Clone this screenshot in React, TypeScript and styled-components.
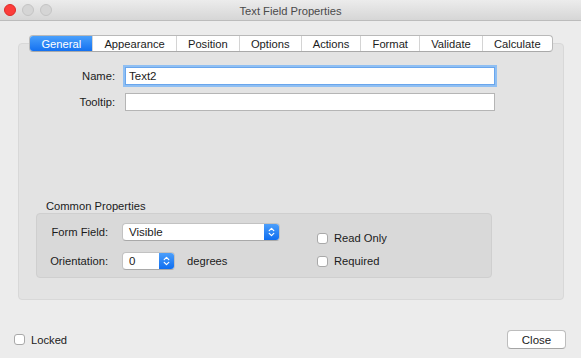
import React from 'react'
import styled, { createGlobalStyle } from 'styled-components'

const Global = createGlobalStyle`
  html, body { margin: 0; padding: 0; }
  body {
    background: #ececec;
    font-family: "Liberation Sans", Arial, Helvetica, sans-serif;
    font-size: 11.2px;
    color: #1b1b1b;
  }
`

const Window = styled.div`
  width: 581px;
  height: 358px;
  display: flex;
  flex-direction: column;
  background: #ececec;
  overflow: hidden;
`

const TitleBar = styled.div`
  height: 20px;
  flex: none;
  display: grid;
  grid-template-columns: 1fr auto 1fr;
  align-items: center;
  background: linear-gradient(#ececec, #d6d6d6);
  border-bottom: 1px solid #bcbcbc;
`

const Lights = styled.div`
  display: flex;
  gap: 6px;
  padding-left: 4px;
`

const Light = styled.span<{ $red?: boolean }>`
  width: 12px;
  height: 12px;
  border-radius: 50%;
  box-sizing: border-box;
  background: ${({ $red }) => ($red ? '#fc3d3b' : '#d5d5d5')};
  border: 1px solid ${({ $red }) => ($red ? '#de2b27' : '#c4c4c4')};
`

const Title = styled.div`
  color: #4a4a4a;
  font-size: 11.2px;
  padding-top: 1px;
`

const Body = styled.div`
  flex: 1;
  display: flex;
  flex-direction: column;
  padding: 14px 17px 0 18px;
`

const Tabs = styled.div`
  position: relative;
  z-index: 1;
  align-self: center;
  display: flex;
  height: 17px;
  background: #fff;
  border: 1px solid #b9b9b9;
  border-bottom-color: #a9a9a9;
  border-radius: 4px;
  box-sizing: border-box;
  overflow: hidden;
`

const Tab = styled.div<{ $active?: boolean }>`
  display: flex;
  align-items: center;
  justify-content: center;
  padding: 0 11.1px;
  color: ${({ $active }) => ($active ? '#fff' : '#1b1b1b')};
  background: ${({ $active }) => ($active ? 'linear-gradient(#4aa0fb, #1471f1)' : 'transparent')};
  & + & { border-left: 1px solid #d4d4d4; }
`

const Panel = styled.div`
  margin-top: -9px;
  height: 257px;
  box-sizing: border-box;
  display: flex;
  flex-direction: column;
  background: #e3e3e3;
  border: 1px solid #d8d8d8;
  border-radius: 4px;
  padding: 23px 0 21px 0;
`

const Fields = styled.div`
  display: grid;
  grid-template-columns: 96px 370px;
  column-gap: 10px;
  row-gap: 8px;
  align-items: center;
`

const Label = styled.label`
  text-align: right;
`

const TextInput = styled.div<{ $focus?: boolean }>`
  height: 18px;
  box-sizing: border-box;
  background: #fff;
  padding: 0 3px;
  display: flex;
  align-items: center;
  font-size: 11.5px;
  border: 1px solid ${({ $focus }) => ($focus ? '#6aa6ec' : '#b5b5b5')};
  box-shadow: ${({ $focus }) => ($focus ? '0 0 0 2px #8fbff3' : 'none')};
`

const Section = styled.div`
  margin-top: auto;
  margin-left: 17px;
  width: 456px;
`

const SectionTitle = styled.div`
  line-height: 14px;
  padding-left: 10px;
`

const Group = styled.div`
  height: 65px;
  box-sizing: border-box;
  display: flex;
  align-items: flex-start;
  background: #d9d9d9;
  border: 1px solid #cfcfcf;
  border-radius: 4px;
  padding: 9px 0 0 0;
`

const GroupGrid = styled.div`
  display: grid;
  grid-template-columns: 71px auto;
  align-content: start;
  column-gap: 14px;
  row-gap: 11px;
  align-items: center;
`

const Inline = styled.div`
  display: flex;
  align-items: center;
  gap: 12px;
`

const Select = styled.div<{ $w: number }>`
  width: ${({ $w }) => $w}px;
  height: 18px;
  box-sizing: border-box;
  display: flex;
  background: #fff;
  border: 1px solid #c2c2c2;
  border-bottom-color: #a9a9a9;
  border-radius: 4px;
  overflow: hidden;
`

const SelectValue = styled.span`
  flex: 1;
  padding-left: 6px;
  display: flex;
  align-items: center;
  font-size: 11.5px;
`

const Stepper = styled.span`
  width: 15px;
  display: flex;
  align-items: center;
  justify-content: center;
  background: linear-gradient(#4c9ffb, #0f6ef0);
`

const Checks = styled.div`
  margin-left: 37px;
  padding-top: 6px;
  display: flex;
  flex-direction: column;
  gap: 5px;
`

const CheckRow = styled.label`
  height: 18px;
  display: flex;
  align-items: center;
  gap: 6px;
`

const Box = styled.span`
  width: 11px;
  height: 11px;
  box-sizing: border-box;
  background: #fff;
  border: 1px solid #a9a9a9;
  border-radius: 3px;
`

const Footer = styled.div`
  margin: 30px -2px 0 -4px;
  height: 19px;
  display: flex;
  align-items: center;
  justify-content: space-between;
`

const Button = styled.button`
  width: 59px;
  height: 19px;
  padding: 0;
  font: inherit;
  font-size: 11.5px;
  color: #1b1b1b;
  background: #fff;
  border: 1px solid #bdbdbd;
  border-bottom-color: #a5a5a5;
  border-radius: 4px;
`

const Arrows = () => (
  <svg width="7" height="10" viewBox="0 0 7 10" fill="none" stroke="#fff" strokeWidth="1.2" strokeLinecap="round" strokeLinejoin="round">
    <path d="M1.2 3.6 3.5 1.3 5.8 3.6" />
    <path d="M1.2 6.4 3.5 8.7 5.8 6.4" />
  </svg>
)

const tabs = ['General', 'Appearance', 'Position', 'Options', 'Actions', 'Format', 'Validate', 'Calculate']

export default function App() {
  return (
    <Window>
      <Global />
      <TitleBar>
        <Lights>
          <Light $red />
          <Light />
          <Light />
        </Lights>
        <Title>Text Field Properties</Title>
        <div />
      </TitleBar>
      <Body>
        <Tabs>
          {tabs.map((t, i) => (
            <Tab key={t} $active={i === 0}>{t}</Tab>
          ))}
        </Tabs>
        <Panel>
          <Fields>
            <Label>Name:</Label>
            <TextInput $focus>Text2</TextInput>
            <Label>Tooltip:</Label>
            <TextInput />
          </Fields>
          <Section>
            <SectionTitle>Common Properties</SectionTitle>
            <Group>
              <GroupGrid>
                <Label>Form Field:</Label>
                <Select $w={158}>
                  <SelectValue>Visible</SelectValue>
                  <Stepper><Arrows /></Stepper>
                </Select>
                <Label>Orientation:</Label>
                <Inline>
                  <Select $w={53}>
                    <SelectValue>0</SelectValue>
                    <Stepper><Arrows /></Stepper>
                  </Select>
                  <span>degrees</span>
                </Inline>
              </GroupGrid>
              <Checks>
                <CheckRow><Box />Read Only</CheckRow>
                <CheckRow><Box />Required</CheckRow>
              </Checks>
            </Group>
          </Section>
        </Panel>
        <Footer>
          <CheckRow><Box />Locked</CheckRow>
          <Button>Close</Button>
        </Footer>
      </Body>
    </Window>
  )
}
